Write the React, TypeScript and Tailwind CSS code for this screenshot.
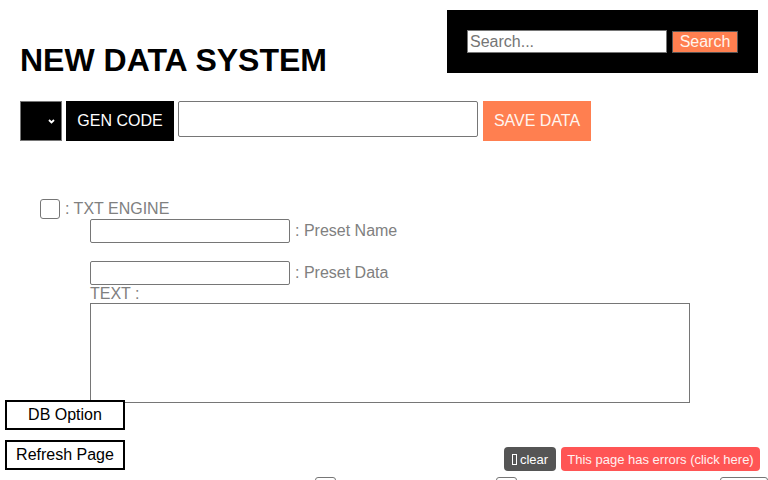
import React from "react";

export default function App() {
  return (
    <div className="relative w-[768px] h-[480px] overflow-hidden bg-white font-['Liberation_Sans',Arial,sans-serif] text-black">
      {/* header */}
      <div className="flex justify-between h-[79px]">
        <h1 className="ml-[20px] mt-[42px] text-[32px] leading-[37px] font-bold">NEW DATA SYSTEM</h1>
        <div className="mt-[10px] mr-[10px] w-[311px] h-[63px] bg-black flex items-center pl-[20px] gap-[5px]">
          <input
            className="w-[200px] h-[23px] bg-white border border-[#767676] px-[2px] text-[16px] leading-[18px] text-black placeholder:text-[#757575] outline-none"
            placeholder="Search..."
          />
          <button className="w-[66px] h-[22px] bg-[#ff7f50] border border-[#555] text-[16px] leading-[18px] text-[#fff5ee] flex items-center justify-center">
            Search
          </button>
        </div>
      </div>

      {/* toolbar */}
      <div className="flex items-start mt-[22px] ml-[20px]">
        <div className="w-[42px] h-[40px] bg-black border border-[#767676] flex items-center justify-end pr-[6px]">
          <svg width="7" height="5" viewBox="0 0 7 5">
            <path d="M1 1 L3.5 3.5 L6 1" stroke="white" strokeWidth="1.8" fill="none" />
          </svg>
        </div>
        <button className="ml-[4px] w-[108px] h-[40px] bg-black text-white text-[16px] flex items-center justify-center">
          GEN CODE
        </button>
        <input className="ml-[4px] w-[300px] h-[36px] border border-[#767676] rounded-[2px] outline-none" />
        <button className="ml-[5px] w-[108px] h-[40px] bg-[#ff7f50] text-[#fff5ee] text-[16px] flex items-center justify-center">
          SAVE DATA
        </button>
      </div>

      {/* txt engine */}
      <div className="mt-[58px] ml-[40px] flex items-start h-[20px] text-[16px] leading-[18px] text-[#808080]">
        <div className="w-[20px] h-[20px] border border-[#767676] rounded-[3px] bg-white" />
        <span className="ml-[5px] mt-[1px]">: TXT ENGINE</span>
      </div>
      <div className="ml-[90px] flex flex-col items-start text-[16px] leading-[18px] text-[#808080]">
        <div className="flex items-start h-[24px]">
          <input className="w-[200px] h-[24px] border border-[#767676] rounded-[2px] outline-none" />
          <span className="ml-[5px] mt-[3px]">: Preset Name</span>
        </div>
        <div className="flex items-start h-[24px] mt-[18px]">
          <input className="w-[200px] h-[24px] border border-[#767676] rounded-[2px] outline-none" />
          <span className="ml-[5px] mt-[3px]">: Preset Data</span>
        </div>
        <div className="h-[18px]">TEXT :</div>
        <textarea className="block w-[600px] h-[100px] border border-[#767676] resize-none outline-none" />
      </div>

      {/* partial content below */}
      <div className="mt-[74px] flex items-start">
        <div className="ml-[315px] w-[22px] h-[22px] border border-[#767676] rounded-[3px]" />
        <div className="ml-[160px] w-[22px] h-[22px] border border-[#767676] rounded-[3px]" />
        <div className="ml-[203px] w-[50px] h-[22px] border border-[#767676] rounded-[3px]" />
      </div>

      {/* fixed buttons */}
      <button className="absolute left-[5px] top-[400px] w-[120px] h-[30px] bg-white border-2 border-black text-[16px] flex items-center justify-center">
        DB Option
      </button>
      <button className="absolute left-[5px] top-[440px] w-[120px] h-[30px] bg-white border-2 border-black text-[16px] flex items-center justify-center">
        Refresh Page
      </button>

      {/* error badges */}
      <div className="absolute top-[447px] left-[504px] flex gap-[5px] text-[13px] leading-[15px]">
        <div className="h-[24px] w-[52px] rounded-[4px] bg-[#555] text-white flex items-center justify-center gap-[3px]">
          <svg width="5" height="11" viewBox="0 0 5 11">
            <rect x="0.5" y="0.5" width="4" height="10" stroke="white" strokeWidth="1" fill="none" />
          </svg>
          <span>clear</span>
        </div>
        <div className="h-[24px] w-[199px] rounded-[4px] bg-[#ff5555] text-[#fff0f0] flex items-center justify-center">
          This page has errors (click here)
        </div>
      </div>
    </div>
  );
}
